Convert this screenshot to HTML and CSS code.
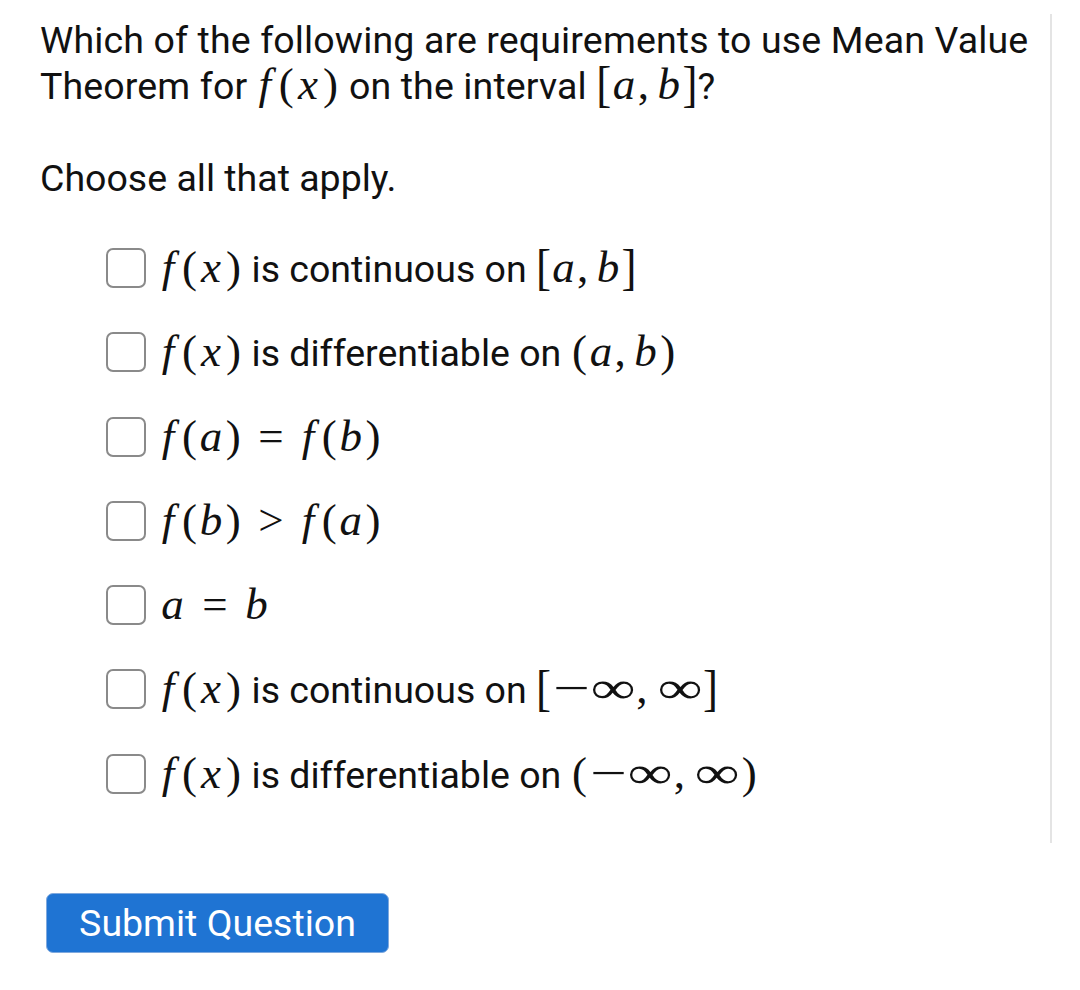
FILE: index.html
```html
<!DOCTYPE html>
<html>
<head>
<meta charset="utf-8">
<link rel="stylesheet" href="styles.css">
</head>
<body>
<div class="question">
  <p class="prompt">Which of the following are requirements to use Mean Value Theorem for <span class="m"><i class="f">f</i><span class="p">(</span><i class="x">x</i><span class="p">)</span></span> on the interval <span class="m"><span class="br">[</span><i>a</i>,<span class="thin"></span><i>b</i><span class="br">]</span></span>?</p>
  <p class="hint">Choose all that apply.</p>
  <ul class="options">
    <li class="option"><span class="box"></span><span class="label"><span class="m"><i class="f">f</i><span class="p">(</span><i class="x">x</i><span class="p">)</span></span> is continuous on <span class="m"><span class="br">[</span><i>a</i>,<span class="thin"></span><i>b</i><span class="br">]</span></span></span></li>
    <li class="option"><span class="box"></span><span class="label"><span class="m"><i class="f">f</i><span class="p">(</span><i class="x">x</i><span class="p">)</span></span> is differentiable on <span class="m"><span class="p">(</span><i>a</i>,<span class="thin"></span><i>b</i><span class="p">)</span></span></span></li>
    <li class="option"><span class="box"></span><span class="label"><span class="m"><i class="f">f</i><span class="p">(</span><i>a</i><span class="p">)</span><span class="rel">=</span><i class="f">f</i><span class="p">(</span><i>b</i><span class="p">)</span></span></span></li>
    <li class="option"><span class="box"></span><span class="label"><span class="m"><i class="f">f</i><span class="p">(</span><i>b</i><span class="p">)</span><span class="rel">&gt;</span><i class="f">f</i><span class="p">(</span><i>a</i><span class="p">)</span></span></span></li>
    <li class="option"><span class="box"></span><span class="label"><span class="m"><i>a</i><span class="rel">=</span><i>b</i></span></span></li>
    <li class="option"><span class="box"></span><span class="label"><span class="m"><i class="f">f</i><span class="p">(</span><i class="x">x</i><span class="p">)</span></span> is continuous on <span class="m"><span class="br">[</span><span class="minus">−</span><span class="inf">∞</span>,<span class="thin wide"></span><span class="inf">∞</span><span class="br">]</span></span></span></li>
    <li class="option"><span class="box"></span><span class="label"><span class="m"><i class="f">f</i><span class="p">(</span><i class="x">x</i><span class="p">)</span></span> is differentiable on <span class="m"><span class="p">(</span><span class="minus">−</span><span class="inf">∞</span>,<span class="thin wide"></span><span class="inf">∞</span><span class="p">)</span></span></span></li>
  </ul>
</div>
<div class="actions">
  <button class="submit" type="button">Submit Question</button>
</div>
</body>
</html>
```

FILE: styles.css
```css
html, body {
  margin: 0;
  padding: 0;
  background: #ffffff;
}

body {
  font-family: Roboto, "Liberation Sans", sans-serif;
  font-size: 37.5px;
  color: #111111;
}

.question {
  margin-top: 14px;
  width: 1010px;
  padding-left: 40px;
  min-height: 829px;
  border-right: 2px solid #e4e4e4;
  box-sizing: content-box;
}

.prompt {
  margin: 0;
  padding-top: 3px;
  line-height: 46px;
  letter-spacing: 0.0035em;
}

.hint {
  margin: 46px 0 0 0;
  line-height: 46px;
}

.m {
  font-family: "Liberation Serif", "DejaVu Serif", serif;
  font-size: 45px;
  line-height: 40px;
  white-space: nowrap;
}

.m i {
  font-style: italic;
  padding-left: 0.03em;
  padding-right: 0.05em;
}

.m i.f {
  padding-left: 0.04em;
  padding-right: 0.14em;
}

.m i.x {
  padding-left: 0.06em;
  padding-right: 0.08em;
}

.m .p {
  padding: 0 0.03em;
}

.m .br {
  display: inline-block;
  transform: scaleY(1.12);
}

.m .minus {
  display: inline-block;
  transform: scaleX(1.45);
  margin: 0 0.13em 0 0.17em;
}

.m .inf {
  display: inline-block;
  transform: scaleX(1.4);
  margin: 0 0.16em;
}

.thin {
  display: inline-block;
  width: 0.16em;
}

.thin.wide {
  width: 0.2em;
}

.rel {
  display: inline-block;
  margin: 0 0.36em;
}

.options {
  list-style: none;
  margin: 45px 0 0 0;
  padding: 0 0 0 66px;
}

.option {
  display: flex;
  align-items: flex-start;
  height: 84.3px;
  line-height: 46px;
}

.box {
  flex: none;
  width: 36px;
  height: 36px;
  margin-top: 2px;
  margin-right: 14px;
  border: 2px solid #8a8a8a;
  border-radius: 7px;
}

.label {
  display: block;
}

.actions {
  padding: 50px 0 0 46px;
}

.submit {
  width: 343px;
  height: 60px;
  padding: 0;
  font-family: Roboto, "Liberation Sans", sans-serif;
  font-size: 37.5px;
  color: #ffffff;
  background: #1f74d3;
  border: 1px solid #7fa9de;
  border-radius: 7px;
}
```
